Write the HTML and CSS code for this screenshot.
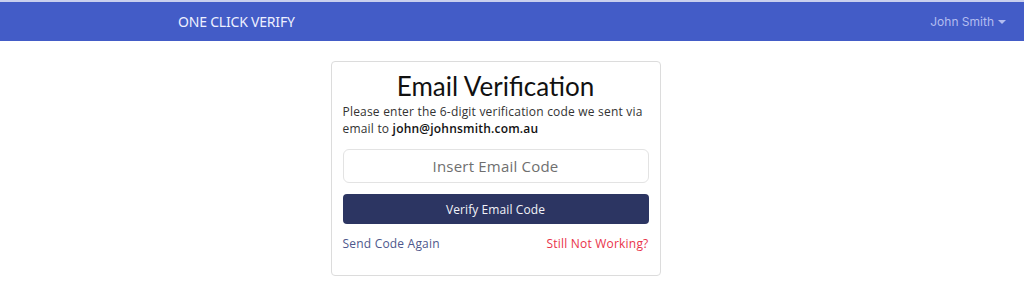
FILE: index.html
```html
<!DOCTYPE html>
<html>
<head>
<meta charset="utf-8">
<link rel="stylesheet" href="styles.css">
</head>
<body>
<nav class="nav">
  <div class="brand">ONE CLICK VERIFY</div>
  <div class="user">John Smith <span class="caret"></span></div>
</nav>
<main class="main">
  <section class="card">
    <h1 class="title">Email Verification</h1>
    <div class="desc">
      <div>Please enter the 6-digit verification code we sent via</div>
      <div>email to <b>john@johnsmith.com.au</b></div>
    </div>
    <input class="code" type="text" placeholder="Insert Email Code">
    <button class="btn">Verify Email Code</button>
    <div class="links">
      <a class="again">Send Code Again</a>
      <a class="help">Still Not Working?</a>
    </div>
  </section>
</main>
</body>
</html>
```
FILE: styles.css
```css
* { box-sizing: border-box; }
body {
  margin: 0;
  background: #fff;
  font-family: "Open Sans", "DejaVu Sans", sans-serif;
}
.nav {
  height: 41px;
  border-top: 2px solid #c9cfee;
  background: #435cc7;
  display: flex;
  align-items: center;
  justify-content: space-between;
  padding: 0 18px 0 178px;
}
.brand {
  color: #eef0ff;
  font-family: "Noto Sans", sans-serif;
  font-size: 14px;
  letter-spacing: -0.2px;
}
.user {
  color: #b3bdf0;
  font-family: "Inter", sans-serif;
  font-size: 12px;
  display: flex;
  align-items: center;
  gap: 4px;
}
.caret {
  width: 0; height: 0;
  border-left: 4px solid transparent;
  border-right: 4px solid transparent;
  border-top: 4px solid #b3bdf0;
  margin-top: 1px;
}
.main {
  display: flex;
  justify-content: center;
  padding-top: 20px;
  padding-right: 33px;
}
.card {
  width: 330px;
  height: 215px;
  border: 1px solid #dcdcdc;
  border-radius: 4px;
  padding: 7px 11px 0 11px;
}
.title {
  margin: 0;
  text-align: center;
  font-family: "Lato", sans-serif;
  font-weight: 400;
  font-size: 26px;
  line-height: 34px;
  color: #111;
}
.desc {
  font-size: 12px;
  line-height: 17px;
  color: #333;
  letter-spacing: 0.2px;
}
.desc b { font-weight: 600; color: #111; }
.code {
  display: block;
  width: 306px;
  height: 34px;
  margin-top: 12px;
  border: 1px solid #e3e3e3;
  border-radius: 6px;
  text-align: center;
  font-family: "Open Sans", sans-serif;
  font-size: 15px;
  letter-spacing: 0.2px;
  color: #333;
}
.code::placeholder { color: #6f6f6f; }
.btn {
  display: block;
  width: 306px;
  height: 30px;
  margin-top: 11px;
  border: 0;
  border-radius: 4px;
  background: #2c3562;
  color: #f2f3f8;
  font-family: "Open Sans", sans-serif;
  font-size: 12px;
  letter-spacing: 0.1px;
}
.links {
  display: flex;
  justify-content: space-between;
  width: 306px;
  margin-top: 11px;
  font-size: 12px;
  letter-spacing: 0.2px;
}
.again { color: #4d578c; }
.help { color: #e9334a; }
```
